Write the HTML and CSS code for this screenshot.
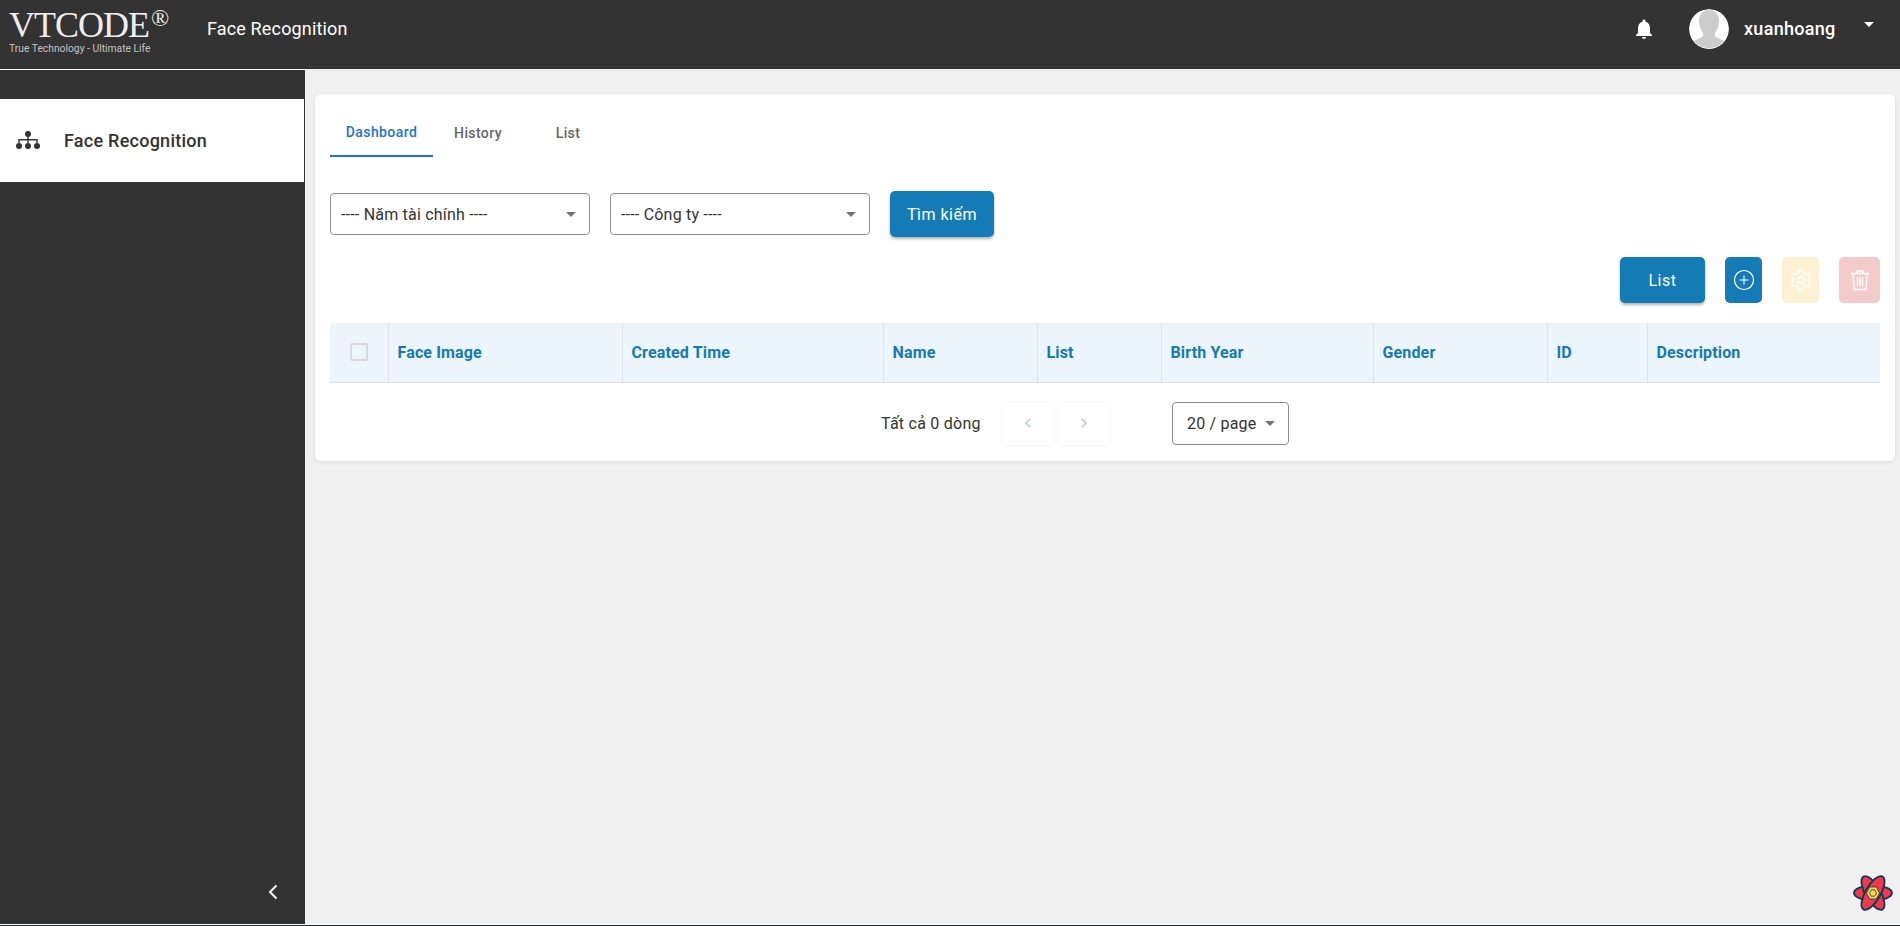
FILE: index.html
```html
<!DOCTYPE html>
<html lang="en">
<head>
  <meta charset="UTF-8" />
  <meta name="viewport" content="width=device-width, initial-scale=1.0" />
  <title>Face Recognition</title>
  <link rel="stylesheet" href="styles.css">
</head>
<body>
  <header class="topbar">
    <div class="logo">
      <div class="logo-name">VTCODE<span class="logo-reg">®</span></div>
      <div class="logo-tag">True Technology - Ultimate Life</div>
    </div>
    <div class="topbar-title">Face Recognition</div>
    <svg class="bell" viewBox="0 0 24 24" width="24" height="24"><path fill="#fff" d="M12 22c1.1 0 2-.9 2-2h-4c0 1.1.9 2 2 2zm6-6v-5c0-3.07-1.63-5.64-4.5-6.32V4c0-.83-.67-1.5-1.5-1.5s-1.5.67-1.5 1.5v.68C7.64 5.36 6 7.92 6 11v5l-2 2v1h16v-1l-2-2z"/></svg>
    <div class="avatar">
      <svg viewBox="0 0 40 40" width="40" height="40"><circle cx="20" cy="20" r="20" fill="#fff"/><path fill="#ccc" d="M20 1c-6 0-10 4-10 11 0 5 2 9 4 12 1 2 0 4-3 5l-6 3c4 5 9 7 15 7s11-2 15-7l-6-3c-3-1-4-3-3-5 2-3 4-7 4-12 0-7-4-11-10-11z"/></svg>
    </div>
    <div class="username">xuanhoang</div>
    <span class="user-caret"></span>
  </header>

  <div class="layout">
    <aside class="sidebar">
      <div class="menu-item">
        <svg viewBox="0 0 24 24" width="24" height="24"><g fill="#333"><circle cx="12" cy="5" r="3"/><circle cx="3" cy="17" r="3"/><circle cx="12" cy="17" r="3"/><circle cx="21" cy="17" r="3"/><path d="M11.300 7h1.400v3h9v4h-1.400v-2.600h-7.600V14h-1.400v-2.600H3.700V14H2.300v-4h9z"/></g></svg>
        <span>Face Recognition</span>
      </div>
      <svg class="collapse" viewBox="0 0 12 16" width="12" height="16"><path fill="none" stroke="#fff" stroke-width="2" d="M9.500 1.500 3 8l6.500 6.500"/></svg>
    </aside>

    <main class="content">
      <section class="card">
        <nav class="tabs">
          <a class="tab tab-active">Dashboard</a>
          <a class="tab tab-history">History</a>
          <a class="tab tab-list">List</a>
        </nav>

        <div class="filters">
          <div class="select select-wide">---- Năm tài chính ----<span class="caret"></span></div>
          <div class="select select-wide">---- Công ty ----<span class="caret"></span></div>
          <button class="btn btn-search">Tìm kiếm</button>
        </div>

        <div class="actions">
          <button class="btn btn-list">List</button>
          <button class="icon-btn icon-add">
            <svg viewBox="0 0 24 24" width="24" height="24" fill="none" stroke="#fff" stroke-width="1.200"><circle cx="12" cy="12" r="9.500"/><path d="M12 7.500v9M7.500 12h9"/></svg>
          </button>
          <button class="icon-btn icon-gear">
            <svg viewBox="0 0 24 24" width="24" height="24" fill="none" stroke="#fff" stroke-width="1.400"><path d="M9.800 2.500h4.400l.5 2.800 1.900 1.100 2.700-1 2.200 3.800-2.200 1.800v2.200l2.200 1.800-2.200 3.800-2.700-1-1.900 1.100-.5 2.800H9.800l-.5-2.800-1.900-1.100-2.700 1-2.200-3.800 2.200-1.800v-2.200L2.500 9.200l2.200-3.800 2.700 1 1.900-1.100z"/><circle cx="12" cy="12" r="3.500"/></svg>
          </button>
          <button class="icon-btn icon-trash">
            <svg viewBox="0 0 24 24" width="24" height="24" fill="none" stroke="#fff" stroke-width="1.400"><path d="M3 5.500h18M9 5.500V3h6v2.500M5 5.500l1 16h12l1-16M9.500 9v9M12 9v9M14.500 9v9"/></svg>
          </button>
        </div>

        <table class="grid">
          <colgroup>
            <col class="col-check"><col class="col-face"><col class="col-time"><col class="col-name"><col class="col-list"><col class="col-birth"><col class="col-gender"><col class="col-id"><col>
          </colgroup>
          <thead>
            <tr>
              <th class="check-cell"><span class="checkbox"></span></th>
              <th>Face Image</th>
              <th>Created Time</th>
              <th>Name</th>
              <th>List</th>
              <th>Birth Year</th>
              <th>Gender</th>
              <th>ID</th>
              <th>Description</th>
            </tr>
          </thead>
        </table>

        <div class="pagination">
          <span class="page-total">Tất cả 0 dòng</span>
          <span class="page-btn"><svg viewBox="0 0 10 12" width="10" height="12"><path fill="none" stroke="#a9cdf5" stroke-width="1.500" d="M7 2 3 6l4 4"/></svg></span>
          <span class="page-btn"><svg viewBox="0 0 10 12" width="10" height="12"><path fill="none" stroke="#a9cdf5" stroke-width="1.500" d="m3 2 4 4-4 4"/></svg></span>
          <div class="select select-page">20 / page<span class="caret"></span></div>
        </div>
      </section>
    </main>
  </div>
  <div class="bottom-line"></div>

  <svg class="query-flower" viewBox="0 0 40 36" width="40" height="36">
    <g fill="#f4364c" stroke="#0b3a55" stroke-width="1.800">
      <ellipse cx="20" cy="18" rx="19" ry="7.500"/>
      <ellipse cx="20" cy="18" rx="19" ry="7.500" transform="rotate(60 20 18)"/>
      <ellipse cx="20" cy="18" rx="19" ry="7.500" transform="rotate(120 20 18)"/>
    </g>
    <path fill="#ffd94c" stroke="#0b3a55" stroke-width=".8" d="M13.500 18l3.200-6h6.600l3.200 6-3.200 6h-6.600z"/>
    <path fill="none" stroke="#0b3a55" stroke-width=".8" d="M16.500 18l1.700-3.200h3.600l1.700 3.200-1.700 3.200h-3.600z"/>
    <circle cx="20" cy="18" r="1.300" fill="#ffd94c"/>
  </svg>
</body>
</html>
```

FILE: styles.css
```css
* {
  box-sizing: border-box;
}
body {
  margin: 0;
  height: 926px;
  overflow: hidden;
  display: flex;
  flex-direction: column;
  font-family: Roboto, Arial, sans-serif;
  background: #f0f0f0;
  color: #333;
}

/* top bar */
.topbar {
  height: 69px;
  flex: none;
  display: flex;
  align-items: center;
  padding-bottom: 11px;
  background: #333;
  color: #fff;
}
.logo {
  width: 207px;
  padding-left: 9px;
  color: #eee;
}
.logo-name {
  font-family: "Liberation Serif", serif;
  font-size: 36px;
  line-height: 30px;
  height: 30px;
  margin-top: 6px;
  letter-spacing: -1px;
  white-space: nowrap;
}
.logo-reg {
  font-size: 24px;
  vertical-align: 11px;
  line-height: 0;
  margin-left: 2px;
}
.logo-tag {
  font-size: 10.300px;
  line-height: 12px;
  margin-top: 3px;
  color: #c4c4c4;
  white-space: nowrap;
}
.topbar-title {
  font-size: 18px;
  letter-spacing: 0.15px;
  flex: 1;
  margin-top: -1px;
}
.bell {
  margin-right: 33px;
}
.avatar {
  width: 40px;
  height: 40px;
  margin-right: 15px;
  border-radius: 50%;
  overflow: hidden;
}
.username {
  font-size: 18px;
  font-weight: 500;
  letter-spacing: 0.3px;
  margin-top: -1px;
  width: 120px;
}
.user-caret {
  width: 0;
  height: 0;
  margin-right: 26px;
  margin-top: -9px;
  border-left: 5px solid transparent;
  border-right: 5px solid transparent;
  border-top: 5px solid #fff;
}

/* layout */
.layout {
  flex: 1;
  display: flex;
  min-height: 0;
}
.sidebar {
  width: 305px;
  flex: none;
  display: flex;
  flex-direction: column;
  padding-top: 29px;
  border-top: 1px solid #fff;
  background: #333;
}
.menu-item {
  height: 83px;
  margin-right: 1px;
  display: flex;
  align-items: center;
  gap: 24px;
  padding-left: 16px;
  background: #fff;
  color: #333;
  font-size: 18px;
  font-weight: 500;
  letter-spacing: 0.25px;
}
.collapse {
  margin: auto 0 24px 267px;
}
.content {
  flex: 1;
  padding: 25px 5px 0 10px;
}
.bottom-line {
  height: 2px;
  flex: none;
  border-top: 1px solid #fff;
  background: #1f2a2e;
}

/* card */
.card {
  padding: 15px 15px 15px;
  border-radius: 6px;
  background: #fff;
  box-shadow: 0 1px 4px rgba(0,0,0,0.08);
}
.tabs {
  display: flex;
  height: 48px;
}
.tab {
  display: flex;
  align-items: center;
  justify-content: center;
  padding-bottom: 1px;
  font-size: 14px;
  font-weight: 500;
  letter-spacing: 0.4px;
  color: #666;
}
.tab-active {
  width: 103px;
  color: #1976d2;
  border-bottom: 2px solid #1976d2;
}
.tab-history {
  width: 90px;
}
.tab-list {
  width: 90px;
}

/* filters */
.filters {
  display: flex;
  align-items: center;
  gap: 20px;
  margin-top: 34px;
}
.select {
  position: relative;
  height: 42px;
  display: flex;
  align-items: center;
  border: 1px solid #8c8c8c;
  border-radius: 4px;
  font-size: 16px;
  letter-spacing: 0.2px;
  color: #333;
  background: #fff;
}
.select-wide {
  width: 260px;
  padding-left: 10px;
}
.caret {
  position: absolute;
  right: 13px;
  top: 18px;
  width: 0;
  height: 0;
  border-left: 5px solid transparent;
  border-right: 5px solid transparent;
  border-top: 5px solid #757575;
}
.btn {
  height: 46px;
  border: 0;
  border-radius: 5px;
  background: #157bb7;
  color: #fff;
  font-family: inherit;
  font-size: 16px;
  font-weight: 400;
  letter-spacing: 0.5px;
  box-shadow: 0 2px 3px rgba(0,0,0,0.3);
}
.btn-search {
  width: 104px;
}

/* actions */
.actions {
  display: flex;
  justify-content: flex-end;
  gap: 20px;
  margin-top: 20px;
}
.btn-list {
  width: 85px;
}
.icon-btn {
  width: 37px;
  height: 46px;
  padding: 0;
  border: 0;
  border-radius: 5px;
  display: flex;
  align-items: center;
  justify-content: center;
}
.icon-add {
  background: #157bb7;
}
.icon-gear {
  background: #fef0d2;
}
.icon-trash {
  width: 41px;
  background: #f3cbcb;
}

/* table */
.grid {
  width: 100%;
  margin-top: 20px;
  table-layout: fixed;
  border-collapse: collapse;
}
.col-check { width: 58px; }
.col-face { width: 234px; }
.col-time { width: 261px; }
.col-name { width: 154px; }
.col-list { width: 124px; }
.col-birth { width: 212px; }
.col-gender { width: 174px; }
.col-id { width: 100px; }
.grid th {
  height: 59px;
  padding: 0 0 0 9px;
  text-align: left;
  font-size: 16px;
  font-weight: 700;
  letter-spacing: 0.15px;
  color: #1579b5;
  background: #ecf5fb;
  border-bottom: 1px solid #dfe3e6;
  border-right: 1px solid #dfe3e6;
}
.grid th:last-child {
  border-right: 0;
}
.grid .check-cell {
  padding: 0 0 0 20px;
}
.checkbox {
  display: block;
  width: 18px;
  height: 18px;
  border: 2px solid #d9d9d9;
  border-radius: 2px;
}

/* pagination */
.pagination {
  display: flex;
  align-items: center;
  gap: 2px;
  margin-top: 18px;
  padding-left: 551px;
}
.page-total {
  width: 118px;
  font-size: 16px;
  letter-spacing: 0.25px;
  color: #333;
}
.page-btn {
  width: 54px;
  height: 45px;
  display: flex;
  align-items: center;
  justify-content: center;
  border: 1px solid #f8f8f8;
  border-radius: 4px;
}
.select-page {
  width: 117px;
  height: 43px;
  margin-left: 59px;
  padding-left: 14px;
}

.query-flower {
  position: fixed;
  left: 1853px;
  top: 875px;
}
```
